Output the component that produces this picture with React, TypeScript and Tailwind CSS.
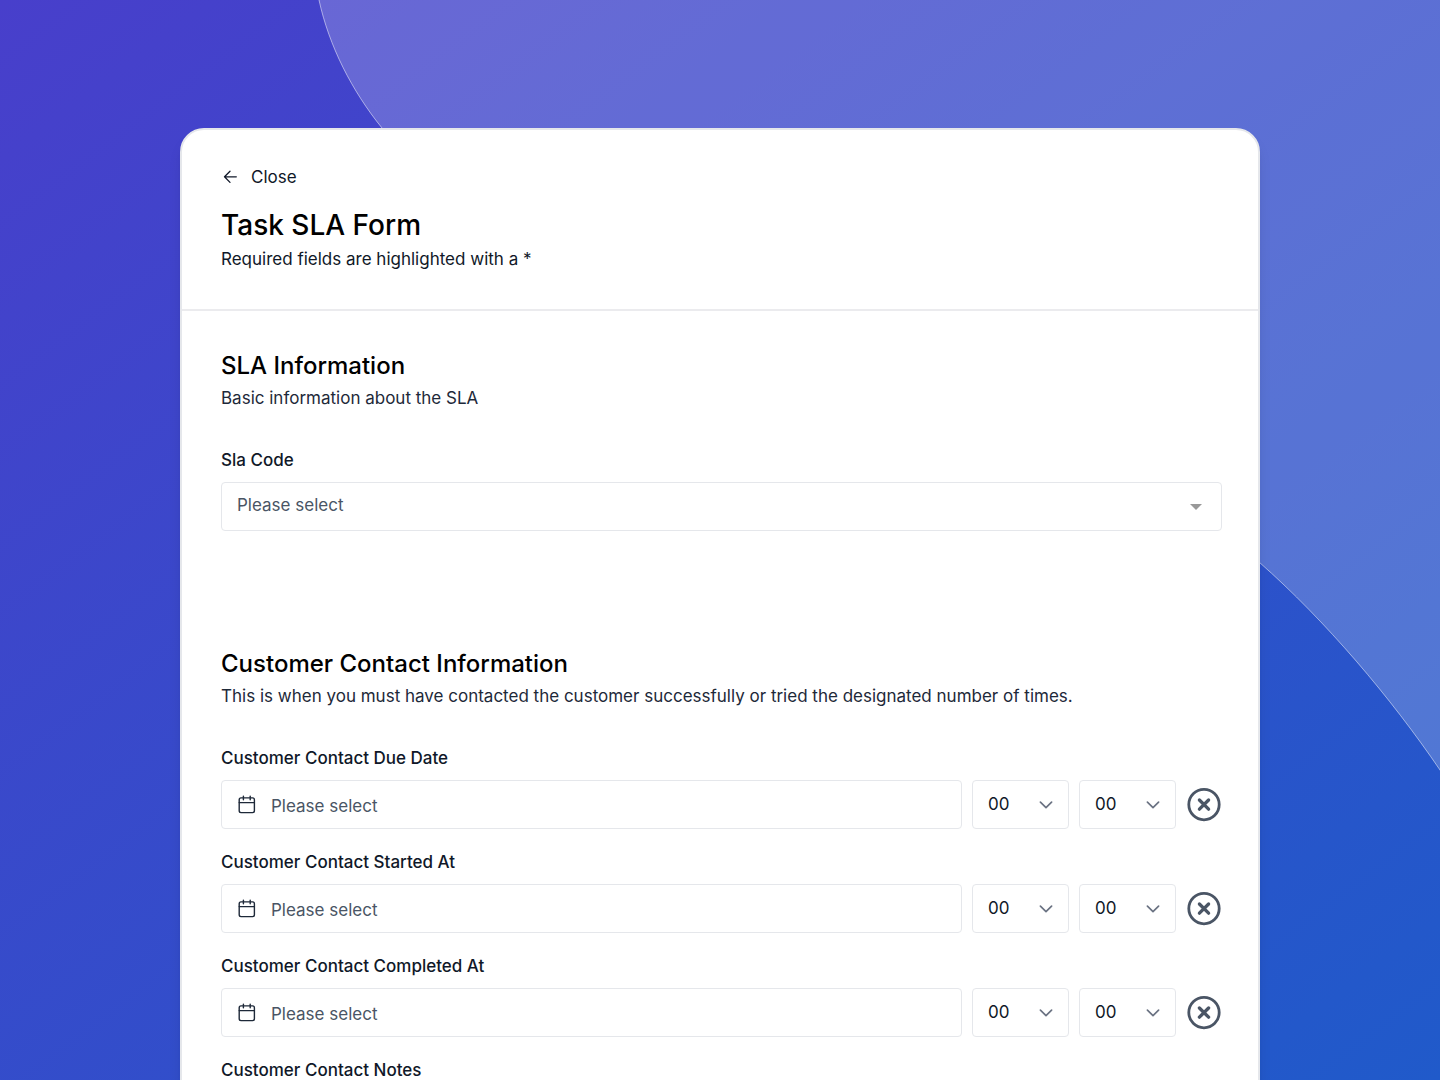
import { useState } from "react";

const HOURS = Array.from({ length: 24 }, (_, i) => String(i).padStart(2, "0"));
const MINUTES = Array.from({ length: 60 }, (_, i) => String(i).padStart(2, "0"));

const CONTACT_DATES = [
  { id: "due", label: "Customer Contact Due Date" },
  { id: "started", label: "Customer Contact Started At" },
  { id: "completed", label: "Customer Contact Completed At" },
];

function ArrowLeftIcon({ className }: { className?: string }) {
  return (
    <svg className={className} viewBox="0 0 18 18" fill="none" stroke="currentColor" strokeWidth="1.3" strokeLinecap="round" strokeLinejoin="round" aria-hidden="true">
      <path d="M15.3 8.8H3.6M9 3.2 3.5 8.8 9 14.4" />
    </svg>
  );
}

function CalendarIcon({ className }: { className?: string }) {
  return (
    <svg className={className} viewBox="0 0 20 20" fill="none" stroke="currentColor" strokeWidth="1.4" strokeLinecap="round" strokeLinejoin="round" aria-hidden="true">
      <rect x="2.2" y="2.9" width="15.2" height="14.7" rx="1.8" />
      <path d="M2.2 7.6h15.2M6.4 1.1v3.6M13.2 1.1v3.6" />
    </svg>
  );
}

function ChevronIcon({ className }: { className?: string }) {
  return (
    <svg className={className} viewBox="0 0 14 14" fill="none" stroke="currentColor" strokeWidth="1.7" strokeLinecap="round" strokeLinejoin="round" aria-hidden="true">
      <path d="m1.4 4.2 5.6 5.4 5.6-5.4" />
    </svg>
  );
}

function CloseCircleIcon({ className }: { className?: string }) {
  return (
    <svg className={className} viewBox="0 0 36 36" fill="none" stroke="currentColor" strokeWidth="2.8" strokeLinecap="round" aria-hidden="true">
      <circle cx="18" cy="17.6" r="15.2" />
      <path strokeWidth="3.3" d="m13.4 13 9.2 9.2M22.6 13l-9.2 9.2" />
    </svg>
  );
}

function Backdrop() {
  return (
    <svg className="absolute inset-0 h-full w-full" viewBox="0 0 1440 1080" preserveAspectRatio="xMidYMid slice" aria-hidden="true">
      <path
        d="M317 -8 L319 0 C329 46 352 91 382 128 C600 360 960 310 1259 562 C1326 621 1391 698 1440 770 L1460 800 V-8 Z"
        fill="white"
        fillOpacity="0.2"
        stroke="white"
        strokeOpacity="0.5"
      />
    </svg>
  );
}

function TimeSelect({ label, options }: { label: string; options: string[] }) {
  const [value, setValue] = useState("00");

  return (
    <div className="grid w-[97px] items-center">
      <select
        aria-label={label}
        value={value}
        onChange={(e) => setValue(e.target.value)}
        className="col-start-1 row-start-1 h-[49px] w-full appearance-none rounded border border-gray-200 bg-white pl-[15px] text-[17px] text-gray-900 outline-none focus:border-indigo-400"
      >
        {options.map((option) => (
          <option key={option}>{option}</option>
        ))}
      </select>
      <ChevronIcon className="pointer-events-none col-start-1 row-start-1 mr-4 h-3.5 w-3.5 justify-self-end text-gray-500" />
    </div>
  );
}

function DateTimeField({ id, label }: { id: string; label: string }) {
  const [date, setDate] = useState("");

  return (
    <div>
      <label htmlFor={id} className="block text-[17px] leading-6 font-medium text-gray-900">
        {label}
      </label>
      <div className="mt-2.5 flex items-center gap-2.5">
        <div className="flex h-[49px] flex-1 items-center gap-3.5 rounded border border-gray-200 px-[15px] focus-within:border-indigo-400">
          <CalendarIcon className="h-5 w-5 shrink-0 text-gray-800" />
          <input
            id={id}
            type="text"
            value={date}
            onChange={(e) => setDate(e.target.value)}
            placeholder="Please select"
            className="h-full w-full min-w-0 bg-transparent pt-0.5 text-[17px] text-gray-900 outline-none placeholder:text-gray-600"
          />
        </div>
        <TimeSelect label={`${label} hour`} options={HOURS} />
        <TimeSelect label={`${label} minute`} options={MINUTES} />
        <button type="button" aria-label={`Clear ${label}`} onClick={() => setDate("")} className="text-gray-600">
          <CloseCircleIcon className="h-9 w-9" />
        </button>
      </div>
    </div>
  );
}

function SectionHeading({ title, description }: { title: string; description: string }) {
  return (
    <div>
      <h2 className="text-[24px] leading-8 font-medium text-black">{title}</h2>
      <p className="mt-1 text-[17px] leading-6 text-gray-800">{description}</p>
    </div>
  );
}

export default function App() {
  return (
    <div className="relative h-screen overflow-hidden bg-linear-to-br/srgb from-[#483fcb] to-[#205aca] font-['Inter',sans-serif]">
      <Backdrop />

      <main className="relative mx-auto mt-32 min-h-screen w-3/4 rounded-3xl border-2 border-gray-200 bg-white shadow-lg">
        {/* Form header */}
        <header className="border-b-2 border-[#ebebee] px-[39px] pt-[35px] pb-[38px]">
          <button type="button" className="flex items-center gap-3 text-[17px] leading-6 text-gray-900">
            <ArrowLeftIcon className="h-[18px] w-[18px]" />
            Close
          </button>
          <h1 className="mt-[18px] text-[28px] leading-9 font-medium text-black">Task SLA Form</h1>
          <p className="mt-1 text-[17px] leading-6 text-gray-900">Required fields are highlighted with a *</p>
        </header>

        <form className="pr-9 pl-[39px]">
          {/* SLA details */}
          <section className="pt-[39px]">
            <SectionHeading title="SLA Information" description="Basic information about the SLA" />
            <label htmlFor="sla-code" className="mt-[38px] block text-[17px] leading-6 font-medium text-gray-900">
              Sla Code
            </label>
            <div className="mt-2.5 grid items-center">
              <select
                id="sla-code"
                className="col-start-1 row-start-1 h-[49px] w-full appearance-none rounded border border-gray-200 bg-white px-[15px] pb-0.5 text-[17px] text-gray-600 outline-none focus:border-indigo-400"
              >
                <option>Please select</option>
              </select>
              <svg className="pointer-events-none col-start-1 row-start-1 mr-5 h-1.5 w-3 justify-self-end text-[#999999]" viewBox="0 0 12 6" fill="currentColor" aria-hidden="true">
                <path d="M0 0h12L6 6z" />
              </svg>
            </div>
          </section>

          {/* Customer contact */}
          <section className="pt-[117px]">
            <SectionHeading
              title="Customer Contact Information"
              description="This is when you must have contacted the customer successfully or tried the designated number of times."
            />
            <div className="mt-[38px] flex flex-col gap-[21px]">
              {CONTACT_DATES.map((field) => (
                <DateTimeField key={field.id} id={field.id} label={field.label} />
              ))}
              <div>
                <label htmlFor="notes" className="block text-[17px] leading-6 font-medium text-gray-900">
                  Customer Contact Notes
                </label>
                <textarea id="notes" rows={4} className="mt-2.5 block w-full rounded border border-gray-200 p-4 text-[17px] outline-none focus:border-indigo-400" />
              </div>
            </div>
          </section>
        </form>
      </main>
    </div>
  );
}
